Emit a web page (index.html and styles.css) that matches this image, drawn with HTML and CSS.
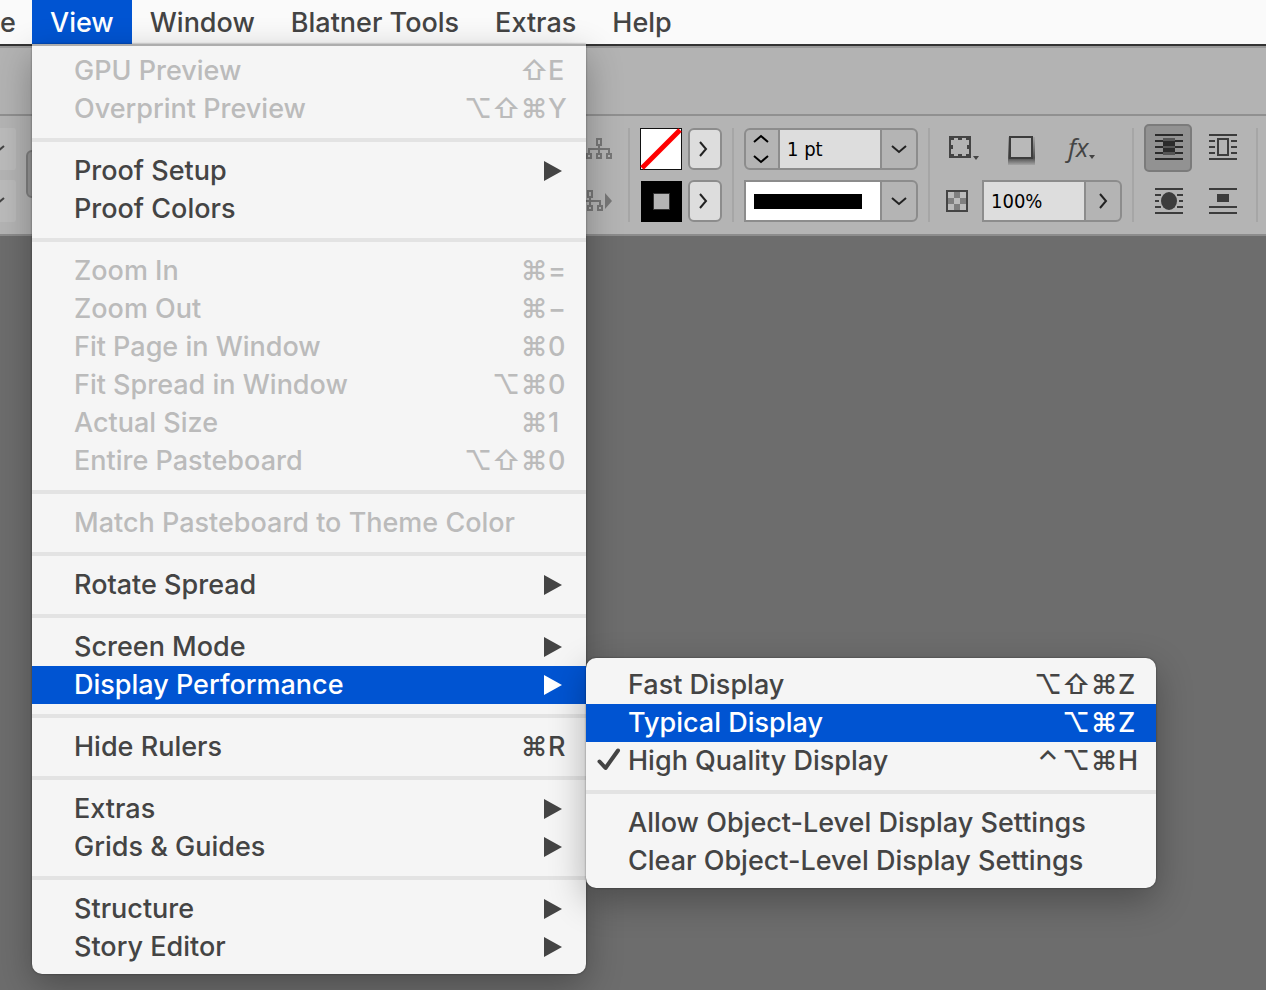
FILE: index.html
```
<!DOCTYPE html>
<html lang="en">
<head>
  <meta charset="UTF-8" />
  <title>View menu</title>
  <link rel="stylesheet" href="styles.css">
</head>
<body>

<svg class="defs" aria-hidden="true">
  <symbol id="arrow" viewBox="0 0 18 20"><path d="M0 0 L18 10 L0 20 Z" fill="currentColor"/></symbol>
  <symbol id="chev-right" viewBox="0 0 10 16"><path d="M2 1 L8 8 L2 15" fill="none" stroke="currentColor" stroke-width="2"/></symbol>
  <symbol id="chev-down" viewBox="0 0 16 10"><path d="M1 2 L8 8 L15 2" fill="none" stroke="currentColor" stroke-width="2"/></symbol>
  <symbol id="chev-up" viewBox="0 0 16 10"><path d="M1 8 L8 2 L15 8" fill="none" stroke="currentColor" stroke-width="2"/></symbol>
</svg>

<header class="menubar">
  <button class="menu-title first">e</button>
  <div class="menu-root">
    <button class="menu-title active">View</button>

    <div class="menu">
      <button class="item" disabled>GPU Preview <span class="keys"><i>⇧</i><b>E</b></span></button>
      <button class="item" disabled>Overprint Preview <span class="keys"><i>⌥</i><i>⇧</i><i>⌘</i><b>Y</b></span></button>
      <hr>
      <button class="item">Proof Setup <svg class="arrow"><use href="#arrow"/></svg></button>
      <button class="item">Proof Colors</button>
      <hr>
      <button class="item" disabled>Zoom In <span class="keys"><i>⌘</i><b>=</b></span></button>
      <button class="item" disabled>Zoom Out <span class="keys"><i>⌘</i><b>−</b></span></button>
      <button class="item" disabled>Fit Page in Window <span class="keys"><i>⌘</i><b>0</b></span></button>
      <button class="item" disabled>Fit Spread in Window <span class="keys"><i>⌥</i><i>⌘</i><b>0</b></span></button>
      <button class="item" disabled>Actual Size <span class="keys"><i>⌘</i><b>1</b></span></button>
      <button class="item" disabled>Entire Pasteboard <span class="keys"><i>⌥</i><i>⇧</i><i>⌘</i><b>0</b></span></button>
      <hr>
      <button class="item" disabled>Match Pasteboard to Theme Color</button>
      <hr>
      <button class="item">Rotate Spread <svg class="arrow"><use href="#arrow"/></svg></button>
      <hr>
      <button class="item">Screen Mode <svg class="arrow"><use href="#arrow"/></svg></button>
      <div class="submenu-root">
        <button class="item selected">Display Performance <svg class="arrow"><use href="#arrow"/></svg></button>
        <div class="menu submenu">
          <button class="item">Fast Display <span class="keys"><i>⌥</i><i>⇧</i><i>⌘</i><b>Z</b></span></button>
          <button class="item selected">Typical Display <span class="keys"><i>⌥</i><i>⌘</i><b>Z</b></span></button>
          <button class="item">
            <svg class="check" viewBox="0 0 24 24"><path d="M2.500 13.500 L8.500 20 L21 2.500" fill="none" stroke="currentColor" stroke-width="4" stroke-linecap="round" stroke-linejoin="round"/></svg>
            High Quality Display <span class="keys"><i>⌃</i><i>⌥</i><i>⌘</i><b>H</b></span>
          </button>
          <hr>
          <button class="item">Allow Object-Level Display Settings</button>
          <button class="item">Clear Object-Level Display Settings</button>
        </div>
      </div>
      <hr>
      <button class="item">Hide Rulers <span class="keys"><i>⌘</i><b>R</b></span></button>
      <hr>
      <button class="item">Extras <svg class="arrow"><use href="#arrow"/></svg></button>
      <button class="item">Grids &amp; Guides <svg class="arrow"><use href="#arrow"/></svg></button>
      <hr>
      <button class="item">Structure <svg class="arrow"><use href="#arrow"/></svg></button>
      <button class="item">Story Editor <svg class="arrow"><use href="#arrow"/></svg></button>
    </div>
  </div>
  <button class="menu-title">Window</button>
  <button class="menu-title">Blatner Tools</button>
  <button class="menu-title">Extras</button>
  <button class="menu-title">Help</button>
</header>

<div class="app-bar"></div>

<div class="controls">
  <div class="left-group">
    <div class="stack">
      <button class="edge" aria-label="Option"><svg class="edge-chev"><use href="#chev-down"/></svg></button>
      <button class="edge" aria-label="Option"><svg class="edge-chev"><use href="#chev-down"/></svg></button>
    </div>
    <div class="link-box"></div>
    <div class="stack tree">
      <svg width="28" height="22" viewBox="0 0 28 22" fill="none" stroke="#777" stroke-width="2">
        <path d="M12 1h4v6h-4zM14 8v7M4 15v-4h20v4M2 16h4v4H2zM12 16h4v4h-4zM22 16h4v4h-4z"/>
      </svg>
      <svg width="28" height="22" viewBox="0 0 28 22" fill="none" stroke="#777" stroke-width="2">
        <path d="M3 1h4v6H3zM5 8v7M0 11h15v4M3 16h4v4H3zM13 16h4v4h-4z"/>
        <path d="M20 3l7 8-7 8z" fill="#777" stroke="none"/>
      </svg>
    </div>
  </div>
  <div class="sep"></div>

  <div class="swatches">
    <svg width="42" height="42" viewBox="0 0 42 42">
      <rect x=".5" y=".5" width="41" height="41" fill="#fff" stroke="#111"/>
      <path d="M2 40 L40 2" stroke="#f00" stroke-width="5"/>
    </svg>
    <button class="btn" aria-label="Fill options"><svg class="cr"><use href="#chev-right"/></svg></button>
    <svg width="42" height="42" viewBox="0 0 42 42">
      <rect x="1" y="1" width="41" height="41" fill="#000"/>
      <rect x="13.500" y="13.500" width="16" height="16" fill="#b4b4b4" stroke="#333"/>
    </svg>
    <button class="btn" aria-label="Stroke options"><svg class="cr"><use href="#chev-right"/></svg></button>
  </div>
  <div class="sep"></div>

  <div class="stack">
    <div class="combo">
      <button class="stepper" aria-label="Step weight">
        <svg class="cd"><use href="#chev-up"/></svg>
        <svg class="cd"><use href="#chev-down"/></svg>
      </button>
      <input class="weight" type="text" value="1 pt" aria-label="Stroke weight">
      <button class="drop" aria-label="Weights"><svg class="cd"><use href="#chev-down"/></svg></button>
    </div>
    <div class="combo square">
      <div class="stroke-type"><span class="stroke-line"></span></div>
      <button class="drop" aria-label="Stroke types"><svg class="cd"><use href="#chev-down"/></svg></button>
    </div>
  </div>
  <div class="sep"></div>

  <div class="stack effects">
    <div class="effect-row">
      <svg width="32" height="30" viewBox="0 0 32 30">
        <rect x="2" y="3" width="20" height="20" fill="none" stroke="#444" stroke-width="2"/>
        <path d="M3 4h3v2H3zM10 4h4v2h-4zM18 4h3v2h-3zM3 20h3v2H3zM10 20h4v2h-4zM18 20h3v2h-3zM3 11h2v4H3zM19 11h2v4h-2z" fill="#444"/>
        <path d="M25 22h6l-3 4z" fill="#444"/>
      </svg>
      <svg width="28" height="32" viewBox="0 0 28 32">
        <linearGradient id="drop-shadow" x1="0" y1="0" x2="0" y2="1">
          <stop offset="0" stop-color="#222" stop-opacity=".1"/>
          <stop offset=".75" stop-color="#222" stop-opacity=".7"/>
          <stop offset="1" stop-color="#222" stop-opacity=".1"/>
        </linearGradient>
        <path d="M0 4h27v28H0z" fill="url(#drop-shadow)"/>
        <rect x="2" y="4" width="22" height="21" fill="#b9b9b9" stroke="#3c3c3c" stroke-width="2"/>
      </svg>
      <button class="fx" aria-label="Effects"><em>fx</em><svg width="6" height="4" viewBox="0 0 6 4"><path d="M0 0h6L3 4z" fill="#444"/></svg></button>
    </div>
    <div class="opacity-row">
      <svg width="22" height="22" viewBox="0 0 22 22">
        <rect x="1" y="1" width="20" height="20" fill="#bbb" stroke="#444" stroke-width="2"/>
        <path d="M8 2h6v6H8zM2 8h6v6H2zM14 8h6v6h-6zM8 14h6v6H8z" fill="#808080"/>
      </svg>
      <div class="combo square">
        <input class="opacity" type="text" value="100%" aria-label="Opacity">
        <button class="drop" aria-label="Opacity slider"><svg class="cr"><use href="#chev-right"/></svg></button>
      </div>
    </div>
  </div>
  <div class="sep"></div>

  <div class="wraps">
    <button class="wrap on" aria-label="No text wrap">
      <svg width="28" height="28" viewBox="0 0 28 28" fill="#2b2b2b"><path d="M0 1h28v2H0zM0 7h28v2H0zM0 13h28v2H0zM0 19h28v2H0zM0 25h28v2H0zM8 9h12v4H8zM8 15h12v4H8z"/><path d="M8 5h12v3H8zM8 13h12v2H8zM8 19h12v3H8z" fill="#555"/></svg>
    </button>
    <button class="wrap" aria-label="Wrap around bounding box">
      <svg width="28" height="28" viewBox="0 0 28 28" fill="#3c3c3c"><path d="M0 1h28v2H0zM0 7h6v2H0zM0 13h6v2H0zM0 19h6v2H0zM22 7h6v2h-6zM22 13h6v2h-6zM22 19h6v2h-6zM0 25h28v2H0z"/><rect x="9" y="6" width="10" height="16" fill="none" stroke="#3c3c3c" stroke-width="2"/></svg>
    </button>
    <button class="wrap" aria-label="Wrap around object shape">
      <svg width="28" height="28" viewBox="0 0 28 28" fill="#3c3c3c"><path d="M0 1h28v2H0zM0 7h6v2H0zM0 13h4v2H0zM0 19h6v2H0zM22 7h6v2h-6zM24 13h4v2h-4zM22 19h6v2h-6zM0 25h28v2H0z"/><ellipse cx="14" cy="14" rx="8" ry="9"/></svg>
    </button>
    <button class="wrap" aria-label="Jump object">
      <svg width="28" height="28" viewBox="0 0 28 28" fill="#3c3c3c"><path d="M0 1h28v2H0zM8 7h12v8H8zM0 19h28v2H0zM0 25h28v2H0z"/></svg>
    </button>
  </div>
  <div class="sep"></div>
</div>

</body>
</html>
```
FILE: styles.css
```
* {
  box-sizing: border-box;
}
body {
  margin: 0;
  min-height: 100vh;
  background: #6d6d6d;
  color: #444;
  font-family: Inter, sans-serif;
  font-size: 27px;
  overflow: hidden;
}
button {
  margin: 0;
  padding: 0;
  border: none;
  background: none;
  color: inherit;
  font: inherit;
}
.defs {
  display: none;
}
svg {
  display: block;
  flex-shrink: 0;
}

/* menu bar */
.menubar {
  display: flex;
  height: 46px;
  background: #fafafa;
  border-bottom: 2px solid #333;
}
.menu-title {
  height: 44px;
  padding: 0 18px;
  white-space: nowrap;
  font-weight: 450;
}
.menu-title.first {
  width: 32px;
  padding: 0 17px 0 0;
  text-align: right;
}
.menu-title.active {
  background: #0054d2;
  color: #fff;
  font-weight: 500;
}
.menu-root,
.submenu-root {
  position: relative;
}

/* drop-down menus */
.menu {
  position: absolute;
  z-index: 2;
  top: 100%;
  left: 0;
  width: 554px;
  padding: 6px 0 8px;
  border-top: 2px solid #adadad;
  border-radius: 0 0 10px 10px;
  background: #f5f5f5;
  box-shadow: 0 0 2px rgba(0, 0, 0, 0.5), 0 12px 36px rgba(0, 0, 0, 0.3);
}
.submenu {
  top: -8px;
  left: 100%;
  width: 570px;
  padding: 8px 0;
  border-top: none;
  border-radius: 10px;
}
.menu hr {
  height: 4px;
  margin: 10px 0;
  border: none;
  background: #e3e3e3;
}
.item {
  position: relative;
  display: flex;
  align-items: center;
  width: 100%;
  height: 38px;
  padding: 0 0 2px 42px;
  text-align: left;
  white-space: nowrap;
  font-weight: 450;
}
.item:disabled {
  color: #bbb;
}
.item.selected {
  background: #0054d2;
  color: #fff;
  font-weight: 500;
}
.keys {
  display: flex;
  margin-left: auto;
  padding-right: 18px;
}
.keys i {
  width: 28px;
  font-style: normal;
  text-align: center;
}
.keys b {
  width: 20px;
  font-weight: inherit;
}
.arrow {
  width: 18px;
  height: 20px;
  margin: 2px 24px 0 auto;
}
.check {
  position: absolute;
  left: 11px;
  width: 24px;
  height: 24px;
}

/* panels under the menu bar */
.app-bar {
  height: 70px;
  background: #b3b3b3;
  border-top: 2px solid #999;
  border-bottom: 2px solid #909090;
}
.controls {
  display: flex;
  gap: 10px;
  height: 120px;
  padding: 12px 0;
  background: #b4b4b4;
  border-bottom: 2px solid #8c8c8c;
  font-family: "DejaVu Sans Condensed", "DejaVu Sans", sans-serif;
  font-size: 20px;
}
.sep {
  flex: none;
  width: 2px;
  background: #a6a6a6;
}
.stack {
  display: flex;
  flex-direction: column;
  gap: 10px;
}
.left-group {
  display: flex;
  flex: none;
  width: 618px;
  padding-right: 5px;
}
.edge {
  width: 16px;
  height: 42px;
  background: #bbb;
  border-radius: 0 3px 3px 0;
  overflow: hidden;
}
.edge-chev {
  width: 16px;
  height: 10px;
  margin-left: -11px;
}
.link-box {
  flex: 1;
  height: 48px;
  margin: 22px 10px 0;
  border: 2px solid #808080;
  border-radius: 6px;
  background: #999;
}
.tree svg {
  height: 42px;
}
.swatches {
  display: grid;
  grid-template-columns: 42px 34px;
  gap: 10px 6px;
}
.btn {
  display: flex;
  align-items: center;
  justify-content: center;
  height: 42px;
  padding-right: 4px;
  border: 2px solid #8c8c8c;
  border-radius: 6px;
  background: #ddd;
  color: #222;
}
.cr {
  width: 10px;
  height: 16px;
}
.cd {
  width: 16px;
  height: 10px;
}
.combo {
  display: flex;
  height: 42px;
  border: 2px solid #8c8c8c;
  border-radius: 6px;
  overflow: hidden;
  color: #222;
}
.combo.square {
  border-radius: 0 6px 6px 0;
}
.combo input {
  padding: 0 7px;
  border: none;
  background: #ddd;
  color: #000;
  font: inherit;
}
.stepper {
  display: flex;
  flex-direction: column;
  align-items: center;
  justify-content: space-between;
  width: 34px;
  padding: 4px 2px 4px 0;
  border-right: 2px solid #8c8c8c;
  color: #000;
}
.drop {
  display: flex;
  align-items: center;
  justify-content: center;
  width: 36px;
  border-left: 2px solid #8c8c8c;
}
.weight {
  width: 100px;
}
.opacity {
  width: 100px;
}
.stroke-type {
  width: 134px;
  padding: 12px 8px;
  background: #fff;
}
.stroke-line {
  display: block;
  width: 108px;
  height: 15px;
  background: #000;
}
.effects {
  width: 182px;
}
.effect-row {
  display: flex;
  align-items: center;
  gap: 28px;
  height: 42px;
  padding-left: 8px;
}
.opacity-row {
  display: flex;
  align-items: center;
  justify-content: space-between;
  padding-left: 6px;
}
.fx {
  display: flex;
  align-items: center;
  padding: 0 0 4px 4px;
  color: #444;
  font-family: "Open Sans", sans-serif;
  font-size: 26px;
  font-weight: 500;
}
.fx svg {
  margin-top: 20px;
}
.wraps {
  display: grid;
  grid-template-columns: 48px 48px;
  gap: 6px;
  margin: -4px 0;
}
.wrap {
  display: flex;
  align-items: center;
  justify-content: center;
  height: 48px;
  padding: 0 0 2px 2px;
  border: 2px solid transparent;
  border-radius: 5px;
}
.wrap.on {
  border-color: #7b7b7b;
  background: #929292;
}
```
